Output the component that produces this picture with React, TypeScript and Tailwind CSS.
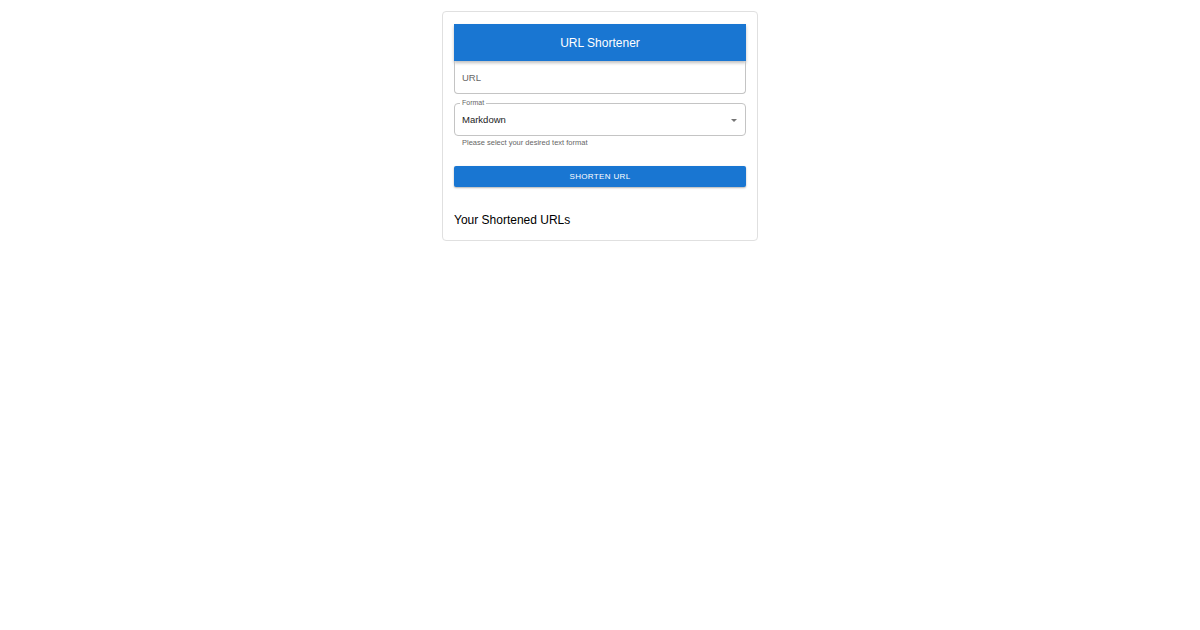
export default function App() {
  return (
    <div
      className="flex min-h-[630px] justify-center bg-white pt-[11px]"
      style={{ fontFamily: "'Liberation Sans', Arial, sans-serif" }}
    >
      <div className="flex w-[316px] flex-col self-start rounded-[4px] border border-[#e0e0e0] bg-white px-[11px] pb-[12px] pt-[12px]">
        <div className="flex h-[37px] items-center justify-center bg-[#1976d2] pt-[1px] text-[12px] text-white shadow-[0_2px_3px_rgba(0,0,0,0.25)]">
          URL Shortener
        </div>
        <div className="flex h-[33px] items-center rounded-b-[4px] border border-t-0 border-[#c4c4c4] px-[7px] pt-[2px] text-[9.5px] text-[#666]">
          URL
        </div>
        <div className="relative mt-[9px] flex h-[33px] items-center justify-between rounded-[4px] border border-[#c4c4c4] px-[7px] pt-[1px] text-[9.5px] text-[#222]">
          <span className="absolute -top-[6px] left-[5px] bg-white px-[2px] text-[7px] leading-[10px] text-[#666]">
            Format
          </span>
          <span>Markdown</span>
          <svg width="6" height="3" viewBox="0 0 6 3" className="mr-[1px]">
            <path d="M0 0 L3 3 L6 0 Z" fill="#757575" />
          </svg>
        </div>
        <p className="mt-[2px] px-[8px] text-[7.5px] leading-[10px] text-[#666]">
          Please select your desired text format
        </p>
        <button
          type="button"
          className="mt-[18px] h-[21px] rounded-[2px] bg-[#1976d2] text-[8px] tracking-[0.35px] text-white shadow-[0_1px_2px_rgba(0,0,0,0.3)]"
        >
          SHORTEN URL
        </button>
        <h2 className="mt-[25px] text-[12px] leading-[16px] text-black">Your Shortened URLs</h2>
      </div>
    </div>
  );
}
